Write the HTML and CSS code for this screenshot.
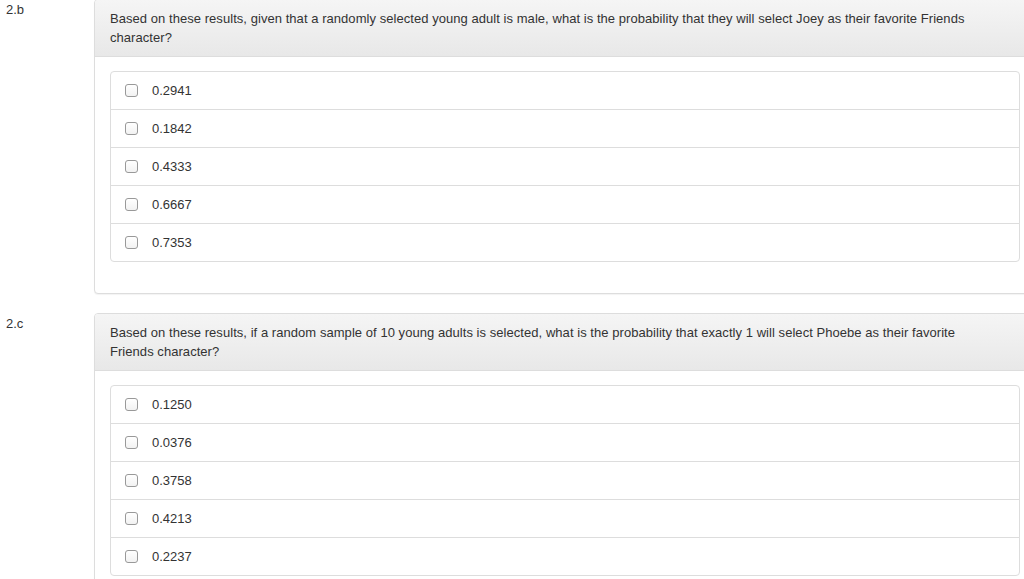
FILE: index.html
```html
<!DOCTYPE html>
<html lang="en">
<head>
<meta charset="utf-8">
<title>Questions</title>
<link rel="stylesheet" href="styles.css">
</head>
<body>
<div class="page">
  <section class="question">
    <div class="qnum">2.b</div>
    <div class="panel">
      <div class="panel-heading"><p class="qtext">Based on these results, given that a randomly selected young adult is male, what is the probability that they will select Joey as their favorite Friends character?</p></div>
      <div class="panel-body">
        <ul class="list-group">
          <li class="item"><span class="box"></span><span class="val">0.2941</span></li>
          <li class="item"><span class="box"></span><span class="val">0.1842</span></li>
          <li class="item"><span class="box"></span><span class="val">0.4333</span></li>
          <li class="item"><span class="box"></span><span class="val">0.6667</span></li>
          <li class="item"><span class="box"></span><span class="val">0.7353</span></li>
        </ul>
      </div>
    </div>
  </section>
  <section class="question">
    <div class="qnum">2.c</div>
    <div class="panel">
      <div class="panel-heading"><p class="qtext">Based on these results, if a random sample of 10 young adults is selected, what is the probability that exactly 1 will select Phoebe as their favorite Friends character?</p></div>
      <div class="panel-body">
        <ul class="list-group">
          <li class="item"><span class="box"></span><span class="val">0.1250</span></li>
          <li class="item"><span class="box"></span><span class="val">0.0376</span></li>
          <li class="item"><span class="box"></span><span class="val">0.3758</span></li>
          <li class="item"><span class="box"></span><span class="val">0.4213</span></li>
          <li class="item"><span class="box"></span><span class="val">0.2237</span></li>
        </ul>
      </div>
    </div>
  </section>
</div>
</body>
</html>
```
FILE: styles.css
```css
html, body {
  margin: 0;
  padding: 0;
  background: #fff;
  overflow: hidden;
}
body {
  font-family: "Liberation Sans", Arial, Helvetica, sans-serif;
  font-size: 13px;
  line-height: 19px;
  color: #333;
}
.page {
  width: 1040px;
  margin-top: -1px;
}
.question {
  display: flex;
  align-items: flex-start;
  margin-bottom: 19px;
}
.qnum {
  width: 94px;
  flex: none;
  padding: 1px 0 0 6px;
  box-sizing: border-box;
}
.panel {
  width: 942px;
  flex: none;
  box-sizing: border-box;
  border: 1px solid #ddd;
  border-radius: 4px;
  background: #fff;
  box-shadow: 0 1px 1px rgba(0, 0, 0, 0.05);
}
.panel-heading {
  padding: 9px 15px;
  border-bottom: 1px solid #ddd;
  border-radius: 3px 3px 0 0;
  background: linear-gradient(to bottom, #f5f5f5 0%, #e8e8e8 100%);
}
.qtext {
  margin: 0;
  max-width: 880px;
  letter-spacing: 0.05px;
}
.panel-body {
  padding: 14px 15px 15px;
}
.list-group {
  list-style: none;
  margin: 0 0 16px;
  padding: 0;
}
.item {
  display: flex;
  align-items: center;
  padding: 9px 14px;
  border: 1px solid #ddd;
  margin-bottom: -1px;
  background: #fff;
}
.item:first-child {
  border-radius: 4px 4px 0 0;
}
.item:last-child {
  border-radius: 0 0 4px 4px;
  margin-bottom: 0;
}
.box {
  width: 11px;
  height: 11px;
  border: 1px solid #999;
  border-radius: 3px;
  background: linear-gradient(to bottom, #fff, #f2f2f2);
  margin-right: 14px;
  flex: none;
}
```
